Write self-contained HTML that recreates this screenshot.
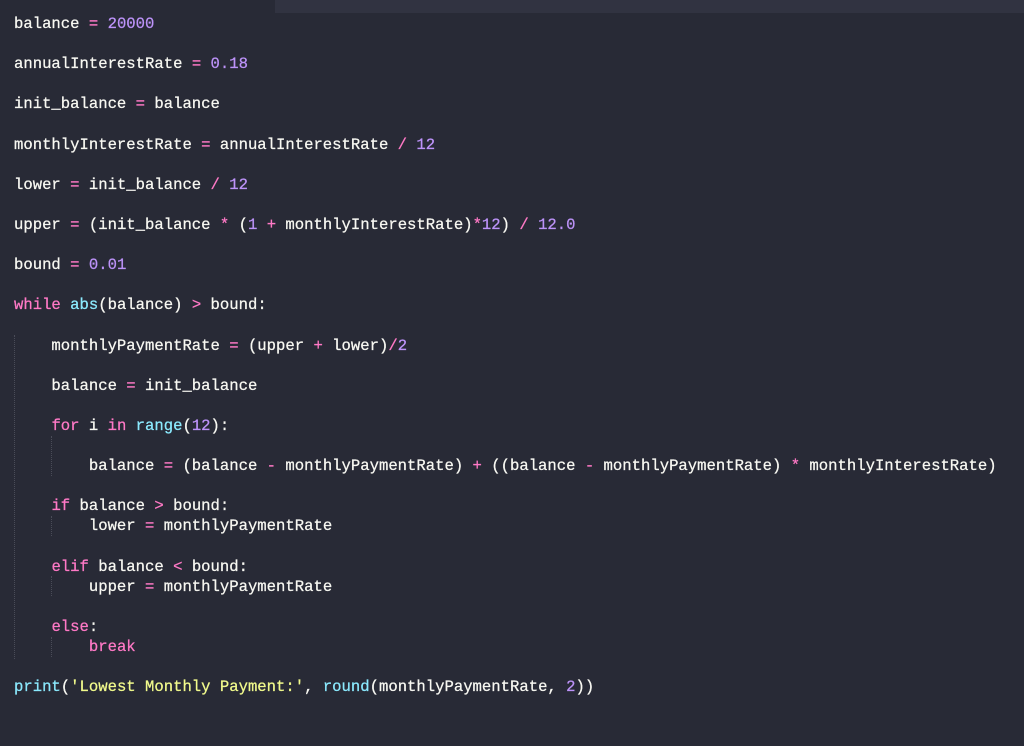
<!DOCTYPE html>
<html><head><style>
html,body{margin:0;padding:0;background:#282a36;width:1024px;height:746px;overflow:hidden}
.bar{position:absolute;left:275px;top:0;width:749px;height:13px;background:#313341}
pre{position:absolute;left:14px;top:14px;margin:0;font-family:"Liberation Mono",monospace;font-size:15.6px;line-height:20.1px;color:#f8f8f2;-webkit-text-stroke:0.25px currentColor}
.k{color:#ff79c6}.n{color:#bd93f9}.b{color:#8be9fd}.s{color:#f1fa8c}
.g{position:absolute;width:0;border-left:1px dotted #4a4c58}
</style></head><body>
<div class="bar"></div>
<div class="g" style="left:14px;top:335px;height:324px"></div>
<div class="g" style="left:51px;top:436px;height:40px"></div>
<div class="g" style="left:51px;top:516px;height:20px"></div>
<div class="g" style="left:51px;top:576px;height:20px"></div>
<div class="g" style="left:51px;top:637px;height:20px"></div>
<pre>balance <span class="k">=</span> <span class="n">20000</span>

annualInterestRate <span class="k">=</span> <span class="n">0.18</span>

init_balance <span class="k">=</span> balance

monthlyInterestRate <span class="k">=</span> annualInterestRate <span class="k">/</span> <span class="n">12</span>

lower <span class="k">=</span> init_balance <span class="k">/</span> <span class="n">12</span>

upper <span class="k">=</span> (init_balance <span class="k">*</span> (<span class="n">1</span> <span class="k">+</span> monthlyInterestRate)<span class="k">*</span><span class="n">12</span>) <span class="k">/</span> <span class="n">12.0</span>

bound <span class="k">=</span> <span class="n">0.01</span>

<span class="k">while</span> <span class="b">abs</span>(balance) <span class="k">&gt;</span> bound:

    monthlyPaymentRate <span class="k">=</span> (upper <span class="k">+</span> lower)<span class="k">/</span><span class="n">2</span>

    balance <span class="k">=</span> init_balance

    <span class="k">for</span> i <span class="k">in</span> <span class="b">range</span>(<span class="n">12</span>):

        balance <span class="k">=</span> (balance <span class="k">-</span> monthlyPaymentRate) <span class="k">+</span> ((balance <span class="k">-</span> monthlyPaymentRate) <span class="k">*</span> monthlyInterestRate)

    <span class="k">if</span> balance <span class="k">&gt;</span> bound:
        lower <span class="k">=</span> monthlyPaymentRate

    <span class="k">elif</span> balance <span class="k">&lt;</span> bound:
        upper <span class="k">=</span> monthlyPaymentRate

    <span class="k">else</span>:
        <span class="k">break</span>

<span class="b">print</span>(<span class="s">'Lowest Monthly Payment:'</span>, <span class="b">round</span>(monthlyPaymentRate, <span class="n">2</span>))</pre>
</body></html>
